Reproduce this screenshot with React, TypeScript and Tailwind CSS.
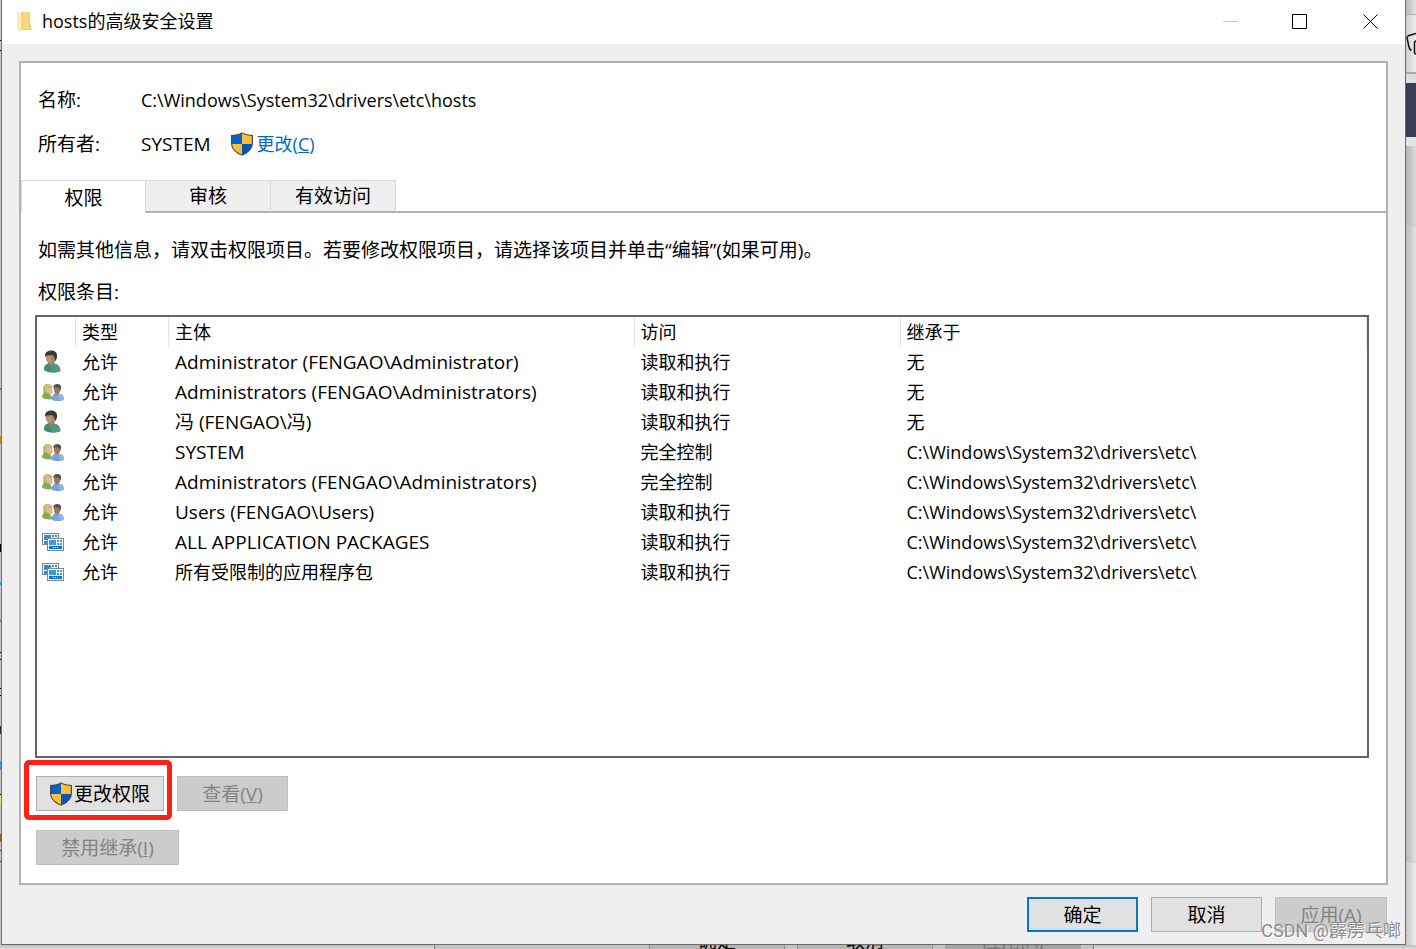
import type { ReactNode } from "react";

type IconKind = "user" | "group" | "package";

interface Entry {
  icon: IconKind;
  type: string;
  principal: string;
  access: string;
  inherited: string;
}

const ETC = "C:\\Windows\\System32\\drivers\\etc\\";

const entries: Entry[] = [
  { icon: "user", type: "允许", principal: "Administrator (FENGAO\\Administrator)", access: "读取和执行", inherited: "无" },
  { icon: "group", type: "允许", principal: "Administrators (FENGAO\\Administrators)", access: "读取和执行", inherited: "无" },
  { icon: "user", type: "允许", principal: "冯 (FENGAO\\冯)", access: "读取和执行", inherited: "无" },
  { icon: "group", type: "允许", principal: "SYSTEM", access: "完全控制", inherited: ETC },
  { icon: "group", type: "允许", principal: "Administrators (FENGAO\\Administrators)", access: "完全控制", inherited: ETC },
  { icon: "group", type: "允许", principal: "Users (FENGAO\\Users)", access: "读取和执行", inherited: ETC },
  { icon: "package", type: "允许", principal: "ALL APPLICATION PACKAGES", access: "读取和执行", inherited: ETC },
  { icon: "package", type: "允许", principal: "所有受限制的应用程序包", access: "读取和执行", inherited: ETC },
];

function Folder() {
  return (
    <svg width="14" height="22" viewBox="0 0 14 22" aria-hidden="true">
      <path d="M4 1h9v12l1 1v5H4z" fill="#f3cd69" />
      <path d="M7 1h5v17H6z" fill="#f8da80" />
      <path d="M0 .5l4.500 3v18L0 18.500z" fill="#fdeaae" />
    </svg>
  );
}

function Shield() {
  return (
    <svg width="22" height="24" viewBox="0 0 22 24" className="shrink-0" aria-hidden="true">
      <path d="M11 .3C8 2 4 3 0 3v8c0 6 5 10.500 11 12.700C17 21.500 22 17 22 11V3C18 3 14 2 11 .3z" fill="#4b4b4b" />
      <path d="M11 1.500C8 3 5 4 1.200 4v8H11z" fill="#0063c9" />
      <path d="M11 1.500C14 3 17 4 20.800 4v8H11z" fill="#ffbd38" />
      <path d="M1.200 12H11v10.500C6 20.500 1.600 17 1.200 12z" fill="#ffbd38" />
      <path d="M20.800 12H11v10.500C16 20.500 20.400 17 20.800 12z" fill="#0058bd" />
    </svg>
  );
}

function UserIcon() {
  return (
    <svg width="22" height="24" viewBox="0 0 22 24" aria-hidden="true">
      <path d="M6 11h6l1 5-3 3-4-3z" fill="#a27a58" />
      <path d="M2 20c0-3 .5-5.500 4-6.500L9 17l4-3.200c3.500 1 5 3 5.500 7.200-3.500 2-12 2.500-16.500-1z" fill="#3a8f6e" />
      <path d="M9 17l4-3.200c3.500 1 5 3 5.500 7.200-1.500.8-5 1.500-8.500 1.400z" fill="#4c9b7b" />
      <path d="M3.500 6C3.500 3 5.500 1.200 9 1.200S14.500 3 14.300 7c-.3 4-2.300 7-5 7-3 0-5.500-3-5.800-8z" fill="#a98566" />
      <path d="M4 8c1.500-1 3-1.500 5-2v7c-2.500 0-4.500-2-5-5z" fill="#bb9878" />
      <path d="M3 6.500C2.500 2.500 5.500.4 9.300.4c4 0 6.200 2.300 5.700 6.300-.3 2-.8 3.300-1.600 4.300L12.500 8c-.5-1.500-1.200-2.700-2.500-3-2 .7-5-.5-7 1.500z" fill="#3a3936" />
    </svg>
  );
}

function GroupIcon() {
  return (
    <svg width="22" height="19" viewBox="0 0 22 19" aria-hidden="true">
      <path d="M1.200 4C2 0 9 0 10 3.500l.3 6.500-3 2-6-1.500c.8-2-.3-4-.1-6.500z" fill="#b9a75c" />
      <path d="M4.500 5l5-1v5c-1 2-4 2-5 0z" fill="#e2bf9c" />
      <path d="M0 14.500c0-3 1.500-4.500 4-5l3 1.500c2 1 3 2.500 3 5-3 1-7 .5-10-1.500z" fill="#84ad50" />
      <path d="M2 3c2-2.500 5.500-2.500 7.500-.2-2 1-4 1-5 3.200L3 9z" fill="#cfbf7c" />
      <path d="M9.500 17c0-4 1.500-6 4-7l3 1 3.500.5c1.500 1.500 2 3.500 1.800 5.500-4 1.500-8.500 1.500-12.300 0z" fill="#7ba4d6" />
      <path d="M16 12l3.500-1c2 1.500 2.500 4 2.300 6l-3.800.8z" fill="#90b5e0" />
      <path d="M11.500 4.500c0-4 6.500-4 7 0 0 4-1 7-3.300 7s-3.300-3-3.700-7z" fill="#9c7759" />
      <path d="M11.200 4C12 .3 18.500 0 19.200 4l-.7 3.500c-.7-2-1.500-3-3-3z" fill="#53504d" />
    </svg>
  );
}

function PackageIcon() {
  return (
    <svg width="22" height="18" viewBox="0 0 22 18" shapeRendering="crispEdges" aria-hidden="true">
      <path d="M0 0h17v12H0z" fill="#858585" />
      <path d="M1 1h15v10H1z" fill="#fff" />
      <path d="M2 2h7v5H2zM10 2h2v2h-2zM13 2h2v2h-2zM2 8h3v3H2z" fill="#2490e8" />
      <path d="M5 5h17v13H5z" fill="#858585" />
      <path d="M6 6h15v11H6z" fill="#fff" />
      <path d="M7 7h7v5H7zM15 7h2v2h-2zM18 7h2v2h-2zM15 10h2v2h-2zM18 10h2v2h-2z" fill="#2f9bf0" />
      <path d="M7 13h13v3H7z" fill="#0078d7" />
      <path d="M11 14h1v1h-1zM13 14h1v1h-1zM15 14h1v1h-1z" fill="#fff" />
    </svg>
  );
}

const icons: Record<IconKind, ReactNode> = {
  user: <UserIcon />,
  group: <GroupIcon />,
  package: <PackageIcon />,
};

function TitleButton({ label, children }: { label: string; children: ReactNode }) {
  return (
    <button type="button" aria-label={label} className="flex h-11 w-[70px] items-center justify-center">
      <svg width="16" height="16" viewBox="0 0 16 16" fill="none" stroke="currentColor">
        {children}
      </svg>
    </button>
  );
}

const cell = "p-0 pl-[6px] text-left font-normal whitespace-nowrap border-l";

function isLatin(text: string) {
  return /[A-Z]/.test(text);
}

export default function App() {
  return (
    <div className="flex h-screen min-h-[640px] flex-col overflow-hidden bg-[#c9c9c9] font-['Open_Sans','Noto_Sans_CJK_SC',sans-serif] text-[19px] leading-6 text-black">
      <div className="flex min-h-0 flex-1">
        <div className="flex w-[2px] shrink-0 flex-col border-r border-[#6e6e6e] bg-[#c8c8c8]" aria-hidden="true">
          <div className="mt-10 h-[11px] border-y border-black" />
          <div className="mt-[337px] h-[2px] bg-[#777]" />
          <div className="mt-[46px] h-2 bg-[#c48a1a]" />
          <div className="mt-[100px] h-2 bg-black" />
          <div className="mt-[30px] h-[3px] bg-[#4597e0]" />
          <div className="mt-[34px] h-[3px] bg-[#4597e0]" />
          <div className="mt-[30px] h-2 border-y border-black" />
          <div className="mt-7 h-2 border-y border-black" />
          <div className="mt-[30px] h-2 bg-[#33284a]" />
          <div className="mt-[27px] h-[9px] bg-[#4a90e2]" />
          <div className="mt-6 h-[11px] border-t border-black bg-[#ecd98a]" />
          <div className="mt-[29px] h-2 bg-[#8a6420]" />
          <div className="mt-2 h-3 border-y border-[#223a70]" />
        </div>

        <main className="flex min-w-0 flex-1 flex-col border-b border-r border-[#6b6b6b] bg-[#efefef]">
          <header className="flex h-11 shrink-0 items-center bg-white pl-[15px]">
            <Folder />
            <h1 className="ml-[11px] flex-1 pb-[2px] text-[18px]">hosts的高级安全设置</h1>
            <div className="flex">
              <span className="text-[#c8c8c8]">
                <TitleButton label="最小化">
                  <path d="M1 7.500h15" />
                </TitleButton>
              </span>
              <TitleButton label="最大化">
                <path d="M.5 .5h14v14h-14z" />
              </TitleButton>
              <TitleButton label="关闭">
                <path d="M1.500 .5l14 14M15.500 .5l-14 14" />
              </TitleButton>
            </div>
          </header>

          <section className="mx-[17px] mt-[17px] flex min-h-0 flex-1 flex-col border-2 border-[#b2b2b2] bg-white">
            <dl className="grid shrink-0 grid-cols-[103px_1fr] gap-y-5 pt-[25px] pl-[17px]">
              <dt>名称:</dt>
              <dd className="text-[18px]">C:\Windows\System32\drivers\etc\hosts</dd>
              <dt>所有者:</dt>
              <dd className="flex items-center">
                SYSTEM
                <a href="#change-owner" className="ml-5 flex items-center gap-1 text-[18px] text-[#0066cc]">
                  <Shield />
                  <span>
                    更改(<span className="underline">C</span>)
                  </span>
                </a>
              </dd>
            </dl>

            <div role="tablist" className="mt-6 flex h-[33px] shrink-0">
              <button type="button" role="tab" aria-selected="true" className="w-[125px] border border-b-0 border-[#dadada] pt-[2px]">
                权限
              </button>
              <button type="button" role="tab" aria-selected="false" className="w-[125px] border-t border-r border-b-2 border-t-[#dadada] border-r-[#dadada] border-b-[#b2b2b2] bg-[#efefef]">
                审核
              </button>
              <button type="button" role="tab" aria-selected="false" className="w-[125px] border-t border-r border-b-2 border-t-[#dadada] border-r-[#dadada] border-b-[#b2b2b2] bg-[#efefef]">
                有效访问
              </button>
              <div className="flex-1 border-b-2 border-[#b2b2b2]" />
            </div>

            <div role="tabpanel" className="flex min-h-0 flex-1 flex-col px-[17px] pt-[25px] pb-[18px]">
              <p>如需其他信息，请双击权限项目。若要修改权限项目，请选择该项目并单击“编辑”(如果可用)。</p>
              <p id="entries-label" className="mt-[18px]">
                权限条目:
              </p>

              <div className="-ml-[3px] mt-[11px] min-h-0 flex-1 overflow-hidden border-2 border-[#646464]">
                <table aria-labelledby="entries-label" className="w-full table-fixed border-separate border-spacing-0 text-[18px]">
                  <colgroup>
                    <col className="w-[38px]" />
                    <col className="w-[93px]" />
                    <col className="w-[35%]" />
                    <col className="w-[20%]" />
                    <col />
                  </colgroup>
                  <thead>
                    <tr className="h-[30px]">
                      <th className="p-0" aria-label="图标" />
                      <th className={`${cell} border-[#e2e2e2]`}>类型</th>
                      <th className={`${cell} border-[#e2e2e2]`}>主体</th>
                      <th className={`${cell} border-[#e2e2e2]`}>访问</th>
                      <th className={`${cell} border-r border-[#e2e2e2]`}>继承于</th>
                    </tr>
                  </thead>
                  <tbody>
                    {entries.map((e, i) => (
                      <tr key={i} className="h-[30px]">
                        <td className="p-0 pl-[5px]">{icons[e.icon]}</td>
                        <td className={`${cell} border-transparent`}>{e.type}</td>
                        <td className={`${cell} border-transparent ${isLatin(e.principal) ? "text-[19px]" : ""}`}>{e.principal}</td>
                        <td className={`${cell} border-transparent`}>{e.access}</td>
                        <td className={`${cell} border-transparent`}>{e.inherited}</td>
                      </tr>
                    ))}
                  </tbody>
                </table>
              </div>

              <div className="-ml-[2px] mt-[18px] flex shrink-0 gap-[13px]">
                <div className="relative">
                  <button type="button" className="flex h-[35px] w-32 items-center justify-center gap-[2px] border border-[#adadad] bg-[#e1e1e1]">
                    <Shield />
                    更改权限
                  </button>
                  <div className="pointer-events-none absolute -top-4 -right-2 -bottom-[9px] -left-3 rounded-[5px] border-5 border-[#ff2015]" />
                </div>
                <button type="button" disabled className="h-[35px] w-[111px] border border-[#bfbfbf] bg-[#cccccc] text-[#838383]">
                  查看(<span className="underline">V</span>)
                </button>
              </div>
              <div className="-ml-[2px] mt-[19px] flex shrink-0">
                <button type="button" disabled className="h-[35px] w-[143px] border border-[#bfbfbf] bg-[#cccccc] text-[#838383]">
                  禁用继承(<span className="underline">I</span>)
                </button>
              </div>
            </div>
          </section>

          <footer className="relative flex shrink-0 justify-end gap-[13px] px-[18px] pt-3 pb-3">
            <button type="button" className="h-[35px] w-[111px] border-2 border-[#0078d7] bg-[#e1e1e1]">
              确定
            </button>
            <button type="button" className="h-[35px] w-[111px] border border-[#adadad] bg-[#e1e1e1]">
              取消
            </button>
            <button type="button" disabled className="h-[35px] w-28 border border-[#bfbfbf] bg-[#cccccc] text-[#838383]">
              应用(A)
            </button>
            <span className="absolute right-1 bottom-px font-['Roboto','Noto_Sans_CJK_SC',sans-serif] text-[18px] leading-6 text-[#8d8d8d] [text-shadow:1px_1px_0_#ffffff]">
              CSDN @霹雳乓啷
            </span>
          </footer>
        </main>

        <div className="flex w-[10px] shrink-0 flex-col bg-linear-to-r from-[#b8babb] to-[#e0e2e4]" aria-hidden="true">
          <div className="h-[15px] border-b border-[#b5b5b5]" />
          <div className="flex h-[59px] items-center justify-end overflow-hidden border-b-2 border-[#aaaaaa] bg-linear-to-r from-[#cfcfcf] to-[#efefef]">
            <svg width="10" height="24" viewBox="0 0 10 24" fill="none" stroke="#111" strokeWidth="1.500">
              <path d="M10 1.500L3 3.500Q.8 4.200 1 6l2 9q.5 2.500 2.500 3.500M10 9Q8.500 9 8.500 11v9q0 2 1.500 2" />
            </svg>
          </div>
          <div className="h-[9px] bg-[#dedede]" />
          <div className="h-[54px] bg-[#3b3b55]" />
          <div className="h-[9px] bg-[#e4e4e4]" />
          <div className="h-20 border-b border-[#c6c6c6] bg-linear-to-r from-[#b4b4b4] to-[#dcdcdc]" />
          <div className="flex-1" />
          <div className="h-[83px] border-t border-[#d0d0d0] bg-linear-to-r from-[#c6c6c6] to-[#f0f0f0]" />
        </div>
      </div>

      <div className="flex h-1 shrink-0 overflow-hidden bg-[#d5d5d5] text-[19px] leading-4" aria-hidden="true">
        <div className="w-[434px] bg-linear-to-b from-[#bcbcbc] to-[#dedede]" />
        <div className="flex w-[660px] items-end justify-end gap-3 border-x border-[#777] bg-[#c4c4c4] pr-3">
          <span className="w-[136px] border-x border-[#8c8c8c] bg-[#b6b6b6] text-center">确定</span>
          <span className="w-[136px] border-x border-[#8c8c8c] bg-[#b6b6b6] text-center">取消</span>
          <span className="w-[136px] bg-[#a5a5a5] text-center text-[#7b7b7b]">应用(A)</span>
        </div>
        <div className="flex-1 bg-linear-to-b from-[#bcbcbc] to-[#dedede]" />
      </div>
    </div>
  );
}
